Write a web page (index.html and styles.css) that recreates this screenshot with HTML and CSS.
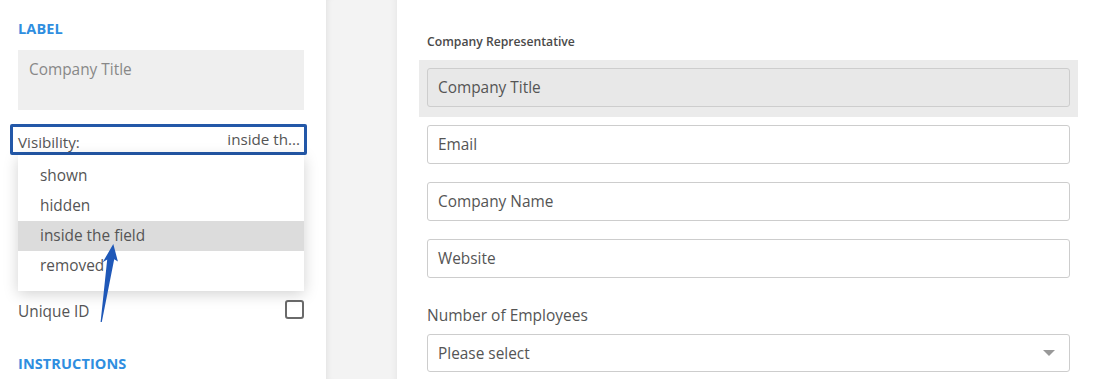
FILE: index.html
```html
<!DOCTYPE html>
<html>
<head>
<meta charset="utf-8">
<link rel="stylesheet" href="styles.css">
</head>
<body>
<div class="app">
  <aside class="panel">
    <div class="section-title label-title">LABEL</div>
    <div class="label-box">Company Title</div>
    <div class="vis-row">
      <span class="vis-label">Visibility:</span>
      <span class="vis-value">inside th...</span>
    </div>
    <div class="uid-row">
      <span>Unique ID</span>
      <span class="checkbox"></span>
    </div>
    <div class="section-title instr-title">INSTRUCTIONS</div>

    <ul class="dropdown">
      <li>shown</li>
      <li>hidden</li>
      <li class="active">inside the field</li>
      <li>removed</li>
    </ul>

    <svg class="pointer" width="30" height="90" viewBox="0 0 30 90">
      <path d="M14.3 0 L18.9 17.5 L15.2 15.2 L2.8 78 L1.6 78 L8.2 15.6 L3.7 18.3 Z" fill="#1f58b8"/>
    </svg>
  </aside>
  <div class="gutter"></div>
  <main class="form">
    <div class="form-head">Company Representative</div>
    <div class="field-highlight">
      <div class="input filled">Company Title</div>
    </div>
    <div class="input first">Email</div>
    <div class="input">Company Name</div>
    <div class="input">Website</div>
    <div class="field-label">Number of Employees</div>
    <div class="input select">
      <span>Please select</span>
      <span class="caret"></span>
    </div>
  </main>
</div>
</body>
</html>
```

FILE: styles.css
```css
* { box-sizing: border-box; }
html, body {
  margin: 0;
  padding: 0;
  background: #fff;
  font-family: "Open Sans", "Noto Sans", sans-serif;
  color: #555;
}
.app {
  display: flex;
  width: 1095px;
  height: 379px;
  overflow: hidden;
}
.panel {
  position: relative;
  width: 326px;
  flex: none;
  padding: 20px 22px 0 18px;
  background: #fff;
}
.section-title {
  color: #2f8ee0;
  font-weight: 700;
  font-size: 14.5px;
  line-height: 18px;
  letter-spacing: 0.1px;
}
.label-box {
  margin-top: 12px;
  height: 60px;
  background: #efefef;
  padding: 9px 11px;
  font-size: 15.4px;
  line-height: 21px;
  color: #888;
}
.vis-row {
  margin: 14px -3px 0 -8px;
  height: 31px;
  border: 3px solid #2358a8;
  border-radius: 2px;
  display: flex;
  justify-content: space-between;
  align-items: flex-end;
  padding: 0 4px 0 5px;
  font-size: 15.2px;
  line-height: 22px;
  color: #555;
  overflow: hidden;
}
.vis-label { position: relative; top: 1px; }
.vis-value { position: relative; top: -2px; }
.uid-row {
  margin-top: 147px;
  display: flex;
  justify-content: space-between;
  align-items: center;
  font-size: 15.4px;
  line-height: 20px;
  color: #555;
}
.uid-row .checkbox { position: relative; top: -3px; }
.checkbox {
  width: 19px;
  height: 19px;
  border: 2px solid #6a6a6a;
  border-radius: 3px;
}
.instr-title { margin-top: 33px; }

.dropdown {
  position: absolute;
  left: 18px;
  top: 155px;
  width: 286px;
  margin: 0;
  padding: 6px 0 10px;
  list-style: none;
  background: #fff;
  box-shadow: 0 3px 14px rgba(0,0,0,0.18);
}
.dropdown li {
  height: 30px;
  line-height: 30px;
  padding-left: 22px;
  font-size: 15.4px;
  color: #555;
}
.dropdown li.active { background: #dcdcdc; }
.pointer {
  position: absolute;
  left: 99px;
  top: 244px;
}

.gutter {
  width: 71px;
  flex: none;
  background: #f3f3f3;
  box-shadow: inset 6px 0 6px -5px rgba(0,0,0,0.08), inset -6px 0 6px -5px rgba(0,0,0,0.06);
}
.form {
  flex: 1;
  padding: 34px 25px 0 30px;
}
.form-head {
  font-size: 12.2px;
  font-weight: 600;
  color: #4a4a4a;
  line-height: 16px;
}
.field-highlight {
  margin: 10px -8px 0;
  padding: 8px 8px 10px;
  background: #ebebeb;
}
.input {
  height: 39px;
  border: 1px solid #cdcdcd;
  border-radius: 3px;
  background: #fff;
  padding: 0 10px;
  display: flex;
  align-items: center;
  font-size: 15.4px;
  color: #555;
  margin-top: 18px;
}
.input.first { margin-top: 8px; }
.input.filled { background: #e8e8e8; margin-top: 0; }
.field-label {
  margin-top: 27px;
  font-size: 15.5px;
  line-height: 20px;
  color: #555;
}
.input.select {
  margin-top: 9px;
  height: 38px;
  justify-content: space-between;
  padding-right: 14px;
}
.caret {
  width: 0;
  height: 0;
  border-left: 6px solid transparent;
  border-right: 6px solid transparent;
  border-top: 6px solid #999;
}
```
